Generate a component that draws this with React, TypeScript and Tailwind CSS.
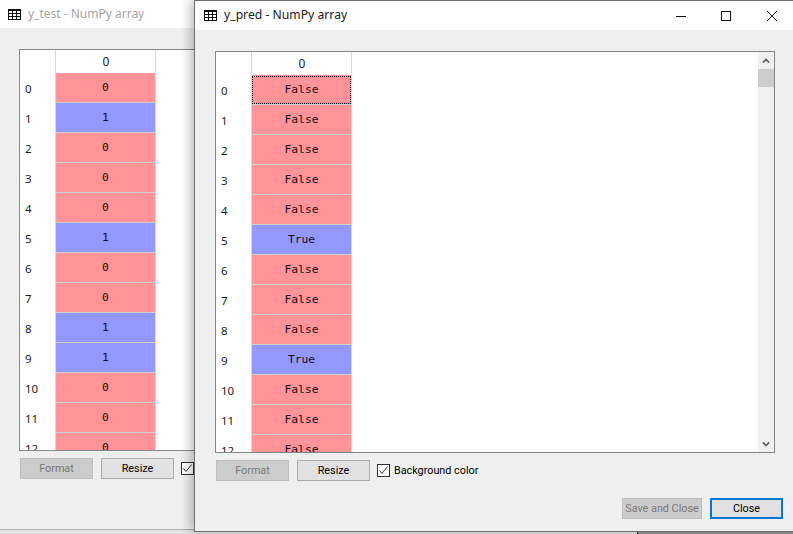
const mono = "font-['DejaVu_Sans_Mono',monospace]";
const ui = "font-['Noto_Sans','Open_Sans',sans-serif]";
const control = "font-['Roboto',sans-serif] text-[10.8px]";

interface ColumnProps {
  rows: string[];
  focused?: boolean;
}

function ArrayColumn({ rows, focused }: ColumnProps) {
  return (
    <div className="flex h-full overflow-hidden">
      <div className="w-[35px] shrink-0 text-[11.5px] text-[#1c1c1c]">
        <div className="h-[23px]" />
        {rows.map((_, i) => (
          <div key={i} className="flex h-[30px] items-center pl-[5px] pt-[2px]">
            {i}
          </div>
        ))}
      </div>
      <div className="w-[101px] shrink-0 border-x border-[#dcdcdc] text-[#111]">
        <div className="flex h-[23px] items-center justify-center pl-px text-[12px] text-[#1c1c3c]">0</div>
        {rows.map((value, i) => {
          const isOn = value === "1" || value === "True";
          return (
            <div
              key={i}
              className={`flex h-[30px] items-center justify-center border-b border-[#cfcfcf] text-[11.3px] ${mono} ${isOn ? "bg-[#9398ff]" : "bg-[#ff9398]"}`}
            >
              {focused && i === 0 ? (
                <span className="flex h-[28px] w-full items-center justify-center border border-dotted border-black pt-px">{value}</span>
              ) : (
                <span className="pt-px">{value}</span>
              )}
            </div>
          );
        })}
      </div>
    </div>
  );
}

function ActionButton({ label, disabled, className = "" }: { label: string; disabled?: boolean; className?: string }) {
  return (
    <div
      className={`flex h-[21px] items-center justify-center whitespace-nowrap border pt-px ${control} ${
        disabled ? "border-[#bfbfbf] bg-[#cccccc] text-[#787878]" : "border-[#adadad] bg-[#e1e1e1] text-black"
      } ${className}`}
    >
      {label}
    </div>
  );
}

function CheckBox() {
  return (
    <div className="flex h-[13px] w-[13px] items-center justify-center border border-[#333] bg-white">
      <svg viewBox="0 0 11 11" className="h-[11px] w-[11px]" fill="none" stroke="#333" strokeWidth="1">
        <path d="M1.5 5.5 L4 8.5 L9.5 1.5" />
      </svg>
    </div>
  );
}

function GridIcon({ className = "" }: { className?: string }) {
  return (
    <svg viewBox="0 0 13 11" className={`h-[11px] w-[13px] shrink-0 ${className}`} fill="none" stroke="#111" shapeRendering="crispEdges">
      <rect x="0.5" y="0.5" width="12" height="10" />
      <path d="M0 1.5 H13" />
      <path d="M0 4.5 H13 M0 7.5 H13 M4.5 1 V11 M8.5 1 V11" />
    </svg>
  );
}

export default function App() {
  const testRows = ["0", "1", "0", "0", "0", "1", "0", "0", "1", "1", "0", "0", "0"];
  const predRows = ["False", "False", "False", "False", "False", "True", "False", "False", "False", "True", "False", "False", "False"];

  return (
    <div className={`relative h-[534px] w-[793px] overflow-hidden bg-[#e4e4e4] ${ui}`}>
      {/* desktop behind the windows */}
      <div className="absolute bottom-0 left-[637px] h-[3px] w-[156px] border-l border-[#333] bg-[#999]" />

      {/* back window */}
      <div className="absolute left-0 top-0 h-[530px] w-[400px] border-b border-[#a8a8a8] bg-[#efefef]">
        <div className="flex h-[28px] items-center gap-[7px] bg-white pl-[8px] text-[12px] text-[#a3a3a3]">
          <GridIcon />
          <span>y_test - NumPy array</span>
        </div>
        <div className="ml-[19px] mt-[21px] h-[402px] w-[300px] border border-[#84888d] bg-white">
          <ArrayColumn rows={testRows} />
        </div>
        <div className="ml-[20px] mt-[7px] flex items-center">
          <ActionButton label="Format" disabled className="w-[73px]" />
          <ActionButton label="Resize" className="ml-[8px] w-[73px]" />
          <div className="ml-[7px]">
            <CheckBox />
          </div>
        </div>
      </div>

      {/* front window */}
      <div className="absolute left-[194px] top-0 flex h-[532px] w-[620px] flex-col border-b border-l border-t border-[#6e6e6e] bg-[#efefef] shadow-[-4px_0_10px_rgba(0,0,0,0.25)]">
        <div className="flex h-[29px] items-center bg-white pl-[9px] text-[12.2px] text-[#1a1a1a]">
          <GridIcon className="mr-[7px]" />
          <span>y_pred - NumPy array</span>
          <div className="ml-auto mr-[37px] flex items-center">
            <svg viewBox="0 0 10 10" className="mr-[35px] h-[10px] w-[10px]" stroke="#111" fill="none">
              <path d="M0 5.5 H10" />
            </svg>
            <svg viewBox="0 0 10 10" className="mr-[36px] h-[10px] w-[10px]" stroke="#111" fill="none">
              <rect x="0.5" y="0.5" width="9" height="9" />
            </svg>
            <svg viewBox="0 0 10 10" className="h-[10px] w-[10px]" stroke="#111" fill="none">
              <path d="M0 0 L10 10 M10 0 L0 10" />
            </svg>
          </div>
        </div>

        <div className="ml-[20px] mt-[21px] flex h-[402px] w-[560px] border border-[#84888d] bg-white">
          <div className="min-w-0 flex-1">
            <ArrayColumn rows={predRows} focused />
          </div>
          <div className="flex w-[16px] shrink-0 flex-col bg-[#f0f0f0]">
            <div className="flex h-[17px] items-center justify-center">
              <svg viewBox="0 0 10 6" className="h-[6px] w-[8px]" fill="none" stroke="#606060" strokeWidth="2">
                <path d="M1 5 L5 1 L9 5" />
              </svg>
            </div>
            <div className="h-[18px] bg-[#cdcdcd]" />
            <div className="flex-1" />
            <div className="flex h-[17px] items-center justify-center">
              <svg viewBox="0 0 10 6" className="h-[6px] w-[8px]" fill="none" stroke="#606060" strokeWidth="2">
                <path d="M1 1 L5 5 L9 1" />
              </svg>
            </div>
          </div>
        </div>

        <div className="ml-[21px] mt-[7px] flex items-center">
          <ActionButton label="Format" disabled className="w-[73px]" />
          <ActionButton label="Resize" className="ml-[8px] w-[73px]" />
          <div className="ml-[7px]">
            <CheckBox />
          </div>
          <span className={`ml-[4px] whitespace-nowrap pt-px text-black ${control}`}>Background color</span>
        </div>

        <div className="ml-[427px] mt-[17px] flex items-center">
          <ActionButton label="Save and Close" disabled className="w-[80px]" />
          <div className={`ml-[8px] flex h-[21px] w-[73px] items-center justify-center border-2 border-[#0078d7] bg-[#e1e1e1] pt-px text-black ${control}`}>
            Close
          </div>
        </div>
      </div>
    </div>
  );
}
